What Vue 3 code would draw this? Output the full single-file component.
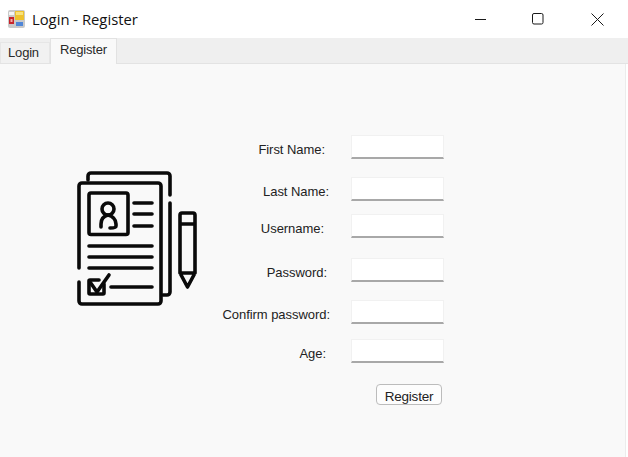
<template>
  <div class="window">
    <div class="titlebar">
      <div class="title-left">
        <svg class="app-icon" width="17" height="18" viewBox="0 0 17 18">
          <rect x="0" y="0" width="17" height="18" rx="2" fill="#c9c9c9" />
          <rect x="1" y="2" width="5" height="3" fill="#f4f4f4" />
          <rect x="1" y="7" width="5" height="7" fill="#c8242b" />
          <rect x="2.5" y="9" width="2" height="3" fill="#f0b0a8" />
          <rect x="7" y="1" width="9" height="9" fill="#eec22e" />
          <rect x="8" y="2" width="7" height="3" fill="#f8e27c" />
          <rect x="8" y="12" width="7" height="4" fill="#4f86d8" />
        </svg>
        <span class="title-text">Login - Register</span>
      </div>
      <div class="controls">
        <svg width="12" height="12" viewBox="0 0 12 12" class="ctl-min"><path d="M0 6.5H11" stroke="#1a1a1a" fill="none" /></svg>
        <svg width="12" height="12" viewBox="0 0 12 12" class="ctl-max"><rect x="0.5" y="0.5" width="10.5" height="10.5" rx="1.5" stroke="#1a1a1a" fill="none" /></svg>
        <svg width="13" height="13" viewBox="0 0 13 13"><path d="M0.5 0.5L12.5 12.5M12.5 0.5L0.5 12.5" stroke="#1a1a1a" fill="none" /></svg>
      </div>
    </div>

    <div class="tabs">
      <div
        v-for="tab in tabs"
        :key="tab"
        class="tab"
        :class="{ active: tab === activeTab }"
        @click="activeTab = tab"
      >{{ tab }}</div>
    </div>

    <div class="pane">
      <svg class="doc-icon" width="150" height="160" viewBox="0 0 150 160" fill="none" stroke="#0a0a0a" stroke-width="3.600" stroke-linecap="round" stroke-linejoin="round">
        <!-- front page -->
        <path d="M19 108V26a3 3 0 0 1 3-3h76a3 3 0 0 1 3 3v115a3 3 0 0 1-3 3H22a3 3 0 0 1-3-3v-19" />
        <!-- back page -->
        <path d="M28 20v-4a3 3 0 0 1 3-3h76a3 3 0 0 1 3 3v19M110 43v89a3 3 0 0 1-3 3h-4" />
        <!-- photo -->
        <rect x="29" y="33" width="39" height="41.500" rx="2" />
        <circle cx="48" cy="49" r="6" />
        <path d="M41 67v-3c0-5 3-8 7-9 4 1 8 4 8 9v2c0 2-3 2-6 2" />
        <path d="M74 43h18M74 54h18M74 66h18M29 86h63M29 97h63M29 108h63M51 127h41" />
        <!-- checkbox -->
        <path d="M44 124v9a1 1 0 0 1-1 1H30a1 1 0 0 1-1-1v-12a1 1 0 0 1 1-1h9" />
        <path d="M30 122l7 10 12-17" />
        <!-- pencil -->
        <path d="M120 55a2 2 0 0 1 2-2h11a2 2 0 0 1 2 2v58l-7.500 14-7.500-14zM120 64h15M120 113h15" />
      </svg>

      <div class="form">
        <div
          v-for="row in rows"
          :key="row.label"
          class="row"
          :style="{ marginTop: row.gap + 'px' }"
        >
          <label class="row-label" :style="{ paddingRight: row.pad + 'px' }">{{ row.label }}</label>
          <input class="row-input" type="text" />
        </div>
        <div class="actions">
          <button class="btn" type="button">Register</button>
        </div>
      </div>
    </div>
  </div>
</template>

<script setup>
import { ref } from 'vue'

const tabs = ['Login', 'Register']
const activeTab = ref('Register')

// the form in the screenshot is hand placed, so gaps are not even
const rows = [
  { label: 'First Name:', gap: 0, pad: 26 },
  { label: 'Last Name:', gap: 19, pad: 22 },
  { label: 'Username:', gap: 14, pad: 27 },
  { label: 'Password:', gap: 21, pad: 24 },
  { label: 'Confirm password:', gap: 19, pad: 21 },
  { label: 'Age:', gap: 16, pad: 25 }
]
</script>

<style>
html,
body {
  margin: 0;
  background: #fff;
}
</style>

<style scoped>
.window {
  width: 628px;
  height: 457px;
  display: flex;
  flex-direction: column;
  background: #fff;
  overflow: hidden;
  font-family: "Liberation Sans", Arial, sans-serif;
  color: #1c1c1c;
}

.titlebar {
  height: 38px;
  flex: none;
  display: flex;
  align-items: center;
  justify-content: space-between;
  background: #fff;
}

.title-left {
  display: flex;
  align-items: center;
  padding-left: 8px;
  gap: 7px;
}

.title-text {
  font-family: "Open Sans", "Noto Sans", sans-serif;
  font-size: 14.800px;
  color: #111;
}

.controls {
  display: flex;
  align-items: center;
  padding-right: 24px;
}

.ctl-min {
  margin-right: 45px;
}

.ctl-max {
  margin-right: 47px;
}

.tabs {
  height: 26px;
  flex: none;
  display: flex;
  align-items: flex-end;
  background: #efefef;
  border-bottom: 1px solid #e3e3e3;
  box-sizing: border-box;
}

.tab {
  height: 21px;
  width: 50px;
  box-sizing: border-box;
  text-align: center;
  font-size: 13px;
  letter-spacing: -0.2px;
  line-height: 20px;
  padding-right: 3px;
  background: #f1f1f1;
  border: 1px solid #e6e6e6;
  border-bottom: none;
  color: #2a2a2a;
  cursor: pointer;
}

.tab.active {
  height: 26px;
  width: 67px;
  line-height: 22px;
  padding-right: 0;
  margin-bottom: -1px;
  background: #f9f9f9;
  border-color: #e2e2e2;
}

.pane {
  flex: 1;
  display: flex;
  align-items: flex-start;
  background: #f9f9f9;
  padding: 71px 0 0 60px;
  margin-right: 2px;
  border-right: 1px solid #ececec;
}

.doc-icon {
  flex: none;
  margin-top: 25px;
}

.form {
  width: 234px;
}

.row {
  display: flex;
  justify-content: flex-end;
  align-items: center;
  height: 23px;
}

.row-label {
  padding-top: 6px;
  font-size: 13px;
  letter-spacing: -0.05px;
  white-space: nowrap;
  color: #222;
}

.row-input {
  width: 93px;
  height: 24px;
  box-sizing: border-box;
  flex: none;
  background: #fff;
  border: 1px solid #f1f1f1;
  border-bottom: 2px solid #a8a8a8;
  padding: 0 4px;
  outline: none;
}

.actions {
  display: flex;
  justify-content: flex-end;
  margin-top: 22px;
  padding-right: 2px;
}

.btn {
  width: 66px;
  height: 21px;
  box-sizing: border-box;
  overflow: hidden;
  padding: 3px 0 0;
  background: #fdfdfd;
  border: 1px solid #bcbcbc;
  border-radius: 4px;
  font-family: "Liberation Sans", Arial, sans-serif;
  font-size: 13.500px;
  letter-spacing: -0.2px;
  line-height: 17px;
  color: #222;
}
</style>
